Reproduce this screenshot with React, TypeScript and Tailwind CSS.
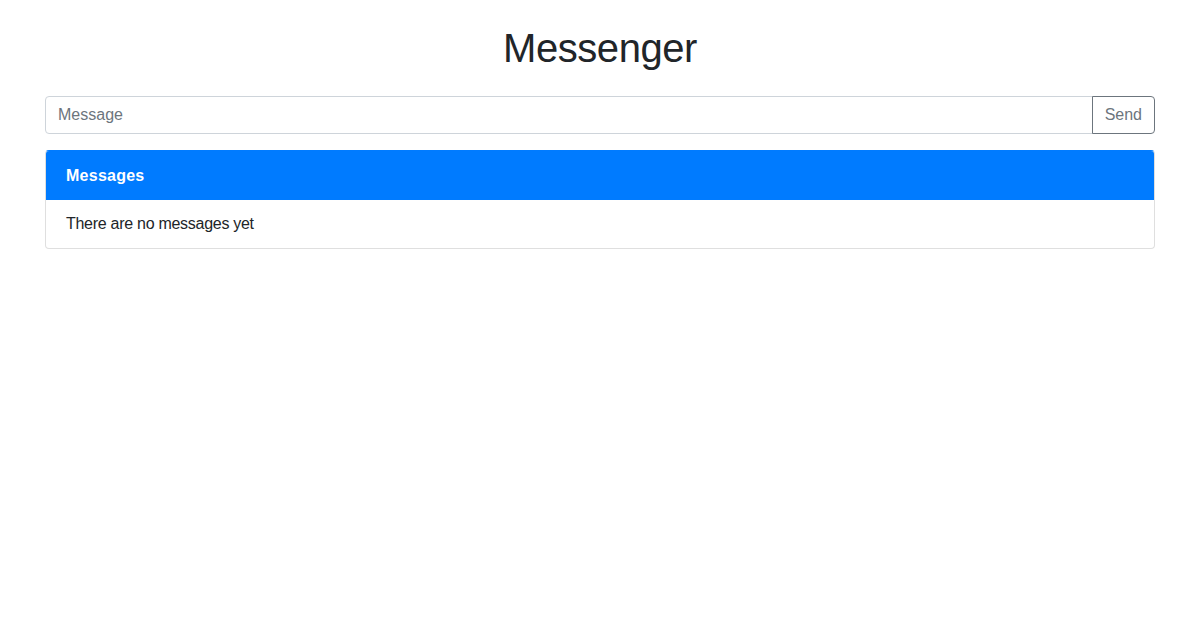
export default function App() {
  return (
    <div className="min-h-[630px] bg-white text-[#212529] font-['Liberation_Sans',Arial,sans-serif] text-base leading-6">
      <div className="mx-auto w-[1140px] px-[15px]">
        <h1 className="my-6 text-center text-[40px] leading-[48px] font-normal tracking-[-0.45px]">
          Messenger
        </h1>

        <div className="mb-4 flex">
          <input
            type="text"
            placeholder="Message"
            className="h-[38px] flex-1 rounded-l-[4px] border border-[#ced4da] px-3 text-base text-[#495057] placeholder:text-[#6c757d] outline-none"
          />
          <button className="-ml-px h-[38px] rounded-r-[4px] border border-[#6c757d] px-3 text-base text-[#6c757d]">
            Send
          </button>
        </div>

        <div className="rounded-[4px] border border-[#dfdfdf] border-t-[#007bff] overflow-hidden">
          <div className="flex h-[49px] items-center bg-[#007bff] px-5 font-bold text-white tracking-[0.25px]">
            Messages
          </div>
          <ul>
            <li className="px-5 py-3 tracking-[-0.28px]">
              There are no messages yet
            </li>
          </ul>
        </div>
      </div>
    </div>
  );
}
